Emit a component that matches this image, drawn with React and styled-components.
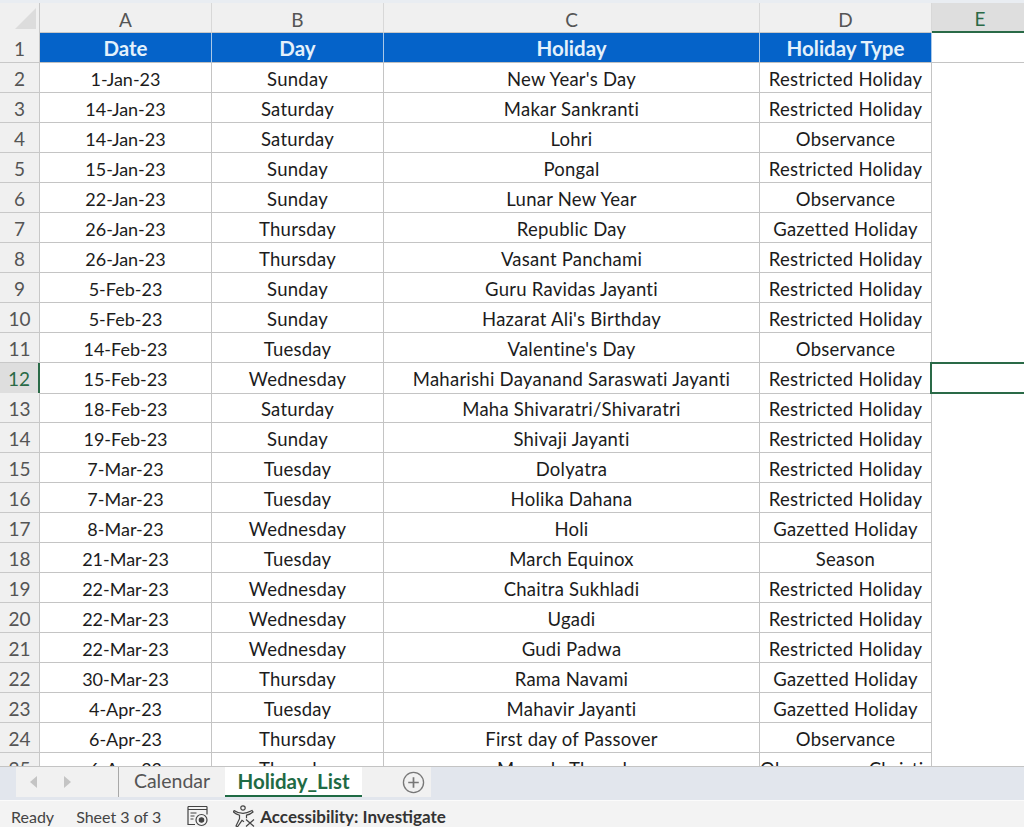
import React from 'react';
import styled, { createGlobalStyle } from 'styled-components';

const GlobalStyle = createGlobalStyle`
  html, body {
    margin: 0;
    padding: 0;
    height: 100%;
    overflow: hidden;
    background: #fff;
  }
  #root {
    height: 100%;
  }
`;

const Page = styled.div`
  height: 827px;
  display: flex;
  flex-direction: column;
  font-family: Lato, "Open Sans", sans-serif;
  background: #fff;
`;

const TopStrip = styled.div`
  height: 3px;
  background: #e9edf2;
  flex: none;
`;

const Sheet = styled.div`
  height: 763px;
  overflow: hidden;
  flex: none;
`;

const Row = styled.div`
  display: grid;
  grid-template-columns: 40px 172px 172px 376px 172px 97px;
  height: 30px;
`;

const Corner = styled.div`
  background: #f0f0f0;
  border-right: 1px solid #c8c8c8;
  box-sizing: border-box;
  display: flex;
  align-items: flex-end;
  justify-content: flex-end;
  padding: 0 3px 4px 0;
`;

const Triangle = styled.div`
  width: 21px;
  height: 21px;
  background: #dcdcdc;
  clip-path: polygon(100% 0, 100% 100%, 0 100%);
`;

const ColHeader = styled.div`
  background: ${props => props.$active ? '#dedede' : '#f0f0f0'};
  color: ${props => props.$active ? '#2a6a47' : '#555'};
  border-right: 1px solid #d8d8d8;
  border-bottom: ${props => props.$active ? '2px solid #2a6a47' : '1px solid #c8c8c8'};
  box-sizing: border-box;
  font-size: 19px;
  display: flex;
  align-items: center;
  justify-content: center;
  padding-top: 3px;
`;

const RowHeader = styled.div`
  background: ${props => props.$active ? '#dedede' : '#f0f0f0'};
  color: ${props => props.$active ? '#2a6a47' : '#555'};
  border-right: ${props => props.$active ? '2px solid #2a6a47' : '1px solid #c8c8c8'};
  border-bottom: 1px solid #c8c8c8;
  box-sizing: border-box;
  font-size: 19px;
  padding-top: 1px;
  display: flex;
  align-items: center;
  justify-content: center;
`;

const HeadCell = styled.div`
  background: #0563c9;
  color: #e4f1fb;
  font-weight: 700;
  font-size: 20.5px;
  border-right: 1px solid #a9c8e8;
  border-bottom: 1px solid #c0c0c0;
  box-sizing: border-box;
  display: flex;
  align-items: center;
  justify-content: center;
`;

const Cell = styled.div`
  color: #1c1c1c;
  font-size: ${props => props.$numeric ? '18px' : '18.5px'};
  letter-spacing: ${props => props.$numeric ? '0' : '0.25px'};
  border-right: 1px solid #c4c4c4;
  border-bottom: 1px solid #c4c4c4;
  box-sizing: border-box;
  padding-top: 2px;
  display: flex;
  align-items: center;
  justify-content: safe center;
  white-space: nowrap;
  overflow: hidden;
`;

const BlankCell = styled.div`
  box-sizing: border-box;
  border-bottom: ${props => props.$line ? '1px solid #c4c4c4' : 'none'};
`;

const SelectedCell = styled.div`
  box-sizing: border-box;
  border: 2px solid #2a6a47;
  margin: -1px 0 0 -2px;
  height: 32px;
  position: relative;
`;

const TabBar = styled.div`
  height: 34px;
  flex: none;
  display: flex;
  background: #e2e6ed;
  border-top: 1px solid #c4c4c4;
  box-sizing: border-box;
  padding: 0 0 3px 16px;
`;

const TabNav = styled.div`
  width: 102px;
  background: #f1f1f1;
  display: flex;
  align-items: center;
  gap: 25px;
  padding-left: 14px;
  box-sizing: border-box;
`;

const NavArrow = styled.svg`
  width: 8px;
  height: 12px;
  fill: #c4c4c4;
`;

const Tab = styled.div`
  font-size: ${props => props.$active ? '20.5px' : '19.5px'};
  display: flex;
  align-items: center;
  justify-content: center;
  box-sizing: border-box;
  width: ${props => props.$width}px;
  color: ${props => props.$active ? '#1f6b45' : '#555'};
  font-weight: ${props => props.$active ? 700 : 400};
  background: ${props => props.$active ? '#fff' : '#f1f1f1'};
  border-left: ${props => props.$active ? 'none' : '1px solid #a8a8a8'};
  border-bottom: ${props => props.$active ? '2px solid #1f6b45' : 'none'};
  padding-bottom: ${props => props.$active ? '0' : '3px'};
`;

const AddArea = styled.div`
  width: 69px;
  background: #f1f1f1;
  display: flex;
  align-items: center;
  justify-content: center;
  padding-left: 33px;
  box-sizing: border-box;
`;

const AddButton = styled.svg`
  width: 23px;
  height: 23px;
  fill: none;
  stroke: #777;
  stroke-width: 1.4;
`;

const StatusBar = styled.div`
  height: 27px;
  flex: none;
  background: #f3f3f3;
  border-top: 1px solid #fbfbfb;
  box-sizing: border-box;
  display: flex;
  align-items: center;
  padding: 4px 0 0 11px;
  color: #444;
  font-size: 16px;
`;

const StatusText = styled.span`
  margin-right: ${props => props.$gap || 0}px;
`;

const StatusIcon = styled.svg`
  width: 22px;
  height: 22px;
  fill: none;
  stroke: #444;
  stroke-width: 1.2;
  flex: none;
  margin-right: ${props => props.$gap || 0}px;
`;

const StatusBold = styled.span`
  font-weight: 700;
  font-size: 17px;
  color: #333;
`;

const holidays = [
  ['1-Jan-23', 'Sunday', "New Year's Day", 'Restricted Holiday'],
  ['14-Jan-23', 'Saturday', 'Makar Sankranti', 'Restricted Holiday'],
  ['14-Jan-23', 'Saturday', 'Lohri', 'Observance'],
  ['15-Jan-23', 'Sunday', 'Pongal', 'Restricted Holiday'],
  ['22-Jan-23', 'Sunday', 'Lunar New Year', 'Observance'],
  ['26-Jan-23', 'Thursday', 'Republic Day', 'Gazetted Holiday'],
  ['26-Jan-23', 'Thursday', 'Vasant Panchami', 'Restricted Holiday'],
  ['5-Feb-23', 'Sunday', 'Guru Ravidas Jayanti', 'Restricted Holiday'],
  ['5-Feb-23', 'Sunday', "Hazarat Ali's Birthday", 'Restricted Holiday'],
  ['14-Feb-23', 'Tuesday', "Valentine's Day", 'Observance'],
  ['15-Feb-23', 'Wednesday', 'Maharishi Dayanand Saraswati Jayanti', 'Restricted Holiday'],
  ['18-Feb-23', 'Saturday', 'Maha Shivaratri/Shivaratri', 'Restricted Holiday'],
  ['19-Feb-23', 'Sunday', 'Shivaji Jayanti', 'Restricted Holiday'],
  ['7-Mar-23', 'Tuesday', 'Dolyatra', 'Restricted Holiday'],
  ['7-Mar-23', 'Tuesday', 'Holika Dahana', 'Restricted Holiday'],
  ['8-Mar-23', 'Wednesday', 'Holi', 'Gazetted Holiday'],
  ['21-Mar-23', 'Tuesday', 'March Equinox', 'Season'],
  ['22-Mar-23', 'Wednesday', 'Chaitra Sukhladi', 'Restricted Holiday'],
  ['22-Mar-23', 'Wednesday', 'Ugadi', 'Restricted Holiday'],
  ['22-Mar-23', 'Wednesday', 'Gudi Padwa', 'Restricted Holiday'],
  ['30-Mar-23', 'Thursday', 'Rama Navami', 'Gazetted Holiday'],
  ['4-Apr-23', 'Tuesday', 'Mahavir Jayanti', 'Gazetted Holiday'],
  ['6-Apr-23', 'Thursday', 'First day of Passover', 'Observance'],
  ['6-Apr-23', 'Thursday', 'Maundy Thursday', 'Observance, Christian'],
];

const App = () => (
  <Page>
    <GlobalStyle />
    <TopStrip />
    <Sheet>
      <Row>
        <Corner><Triangle /></Corner>
        <ColHeader>A</ColHeader>
        <ColHeader>B</ColHeader>
        <ColHeader>C</ColHeader>
        <ColHeader>D</ColHeader>
        <ColHeader $active>E</ColHeader>
      </Row>
      <Row>
        <RowHeader>1</RowHeader>
        <HeadCell>Date</HeadCell>
        <HeadCell>Day</HeadCell>
        <HeadCell>Holiday</HeadCell>
        <HeadCell>Holiday Type</HeadCell>
        <BlankCell $line />
      </Row>
      {holidays.map((row, i) => (
        <Row key={i}>
          <RowHeader $active={i === 10}>{i + 2}</RowHeader>
          {row.map((text, j) => <Cell key={j} $numeric={j === 0}>{text}</Cell>)}
          {i === 10 ? <SelectedCell /> : <BlankCell />}
        </Row>
      ))}
    </Sheet>
    <TabBar>
      <TabNav>
        <NavArrow viewBox="0 0 8 12"><path d="M7 0v12L0 6z" /></NavArrow>
        <NavArrow viewBox="0 0 8 12"><path d="M1 0v12l7-6z" /></NavArrow>
      </TabNav>
      <Tab $width={107}>Calendar</Tab>
      <Tab $width={137} $active>Holiday_List</Tab>
      <AddArea>
        <AddButton viewBox="0 0 24 24">
          <circle cx="12" cy="12" r="10.5" />
          <path d="M12 6.5v11M6.5 12h11" strokeWidth="1.8" />
        </AddButton>
      </AddArea>
    </TabBar>
    <StatusBar>
      <StatusText $gap={22}>Ready</StatusText>
      <StatusText $gap={26}>Sheet 3 of 3</StatusText>
      <StatusIcon $gap={24} viewBox="0 0 22 22">
        <path d="M1 1.5h19M1 4.5h19M1 1.5v18h7M20 1.5v8" />
        <path d="M3.5 8h6M3.5 11h4M3.5 14h3" />
        <circle cx="14.5" cy="15" r="5.5" />
        <circle cx="14.5" cy="15" r="2.2" fill="#444" />
      </StatusIcon>
      <StatusIcon $gap={5} viewBox="0 0 22 22">
        <circle cx="10" cy="3" r="2.2" />
        <path d="M1 5.5c2 1.5 5 2.8 9 2.8s6-1.2 9-2.8l1 1.5c-2 1.8-4 2.6-6.5 3.2v3M1 5.5L0.5 7c2 1.8 4 2.6 6 3.2v3.5L3 21l1.5 0.8 4.5-6.5 2 1.5" />
        <path d="M13 14.5l8 7M21 14.5l-8 7" />
      </StatusIcon>
      <StatusBold>Accessibility: Investigate</StatusBold>
    </StatusBar>
  </Page>
);

export default App;
